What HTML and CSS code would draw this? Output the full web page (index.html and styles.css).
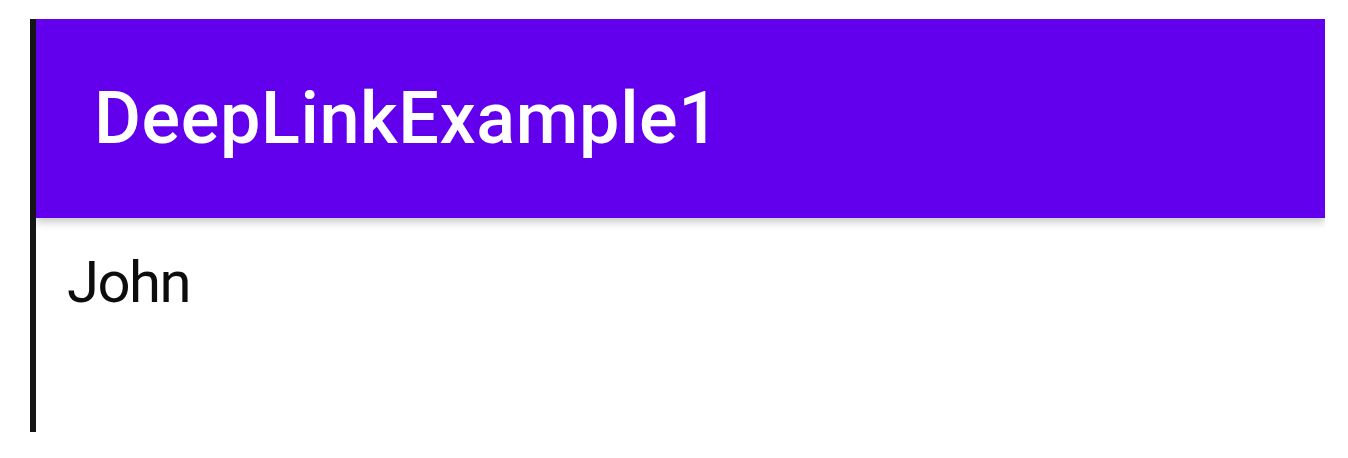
FILE: index.html
```html
<!DOCTYPE html>
<html>
<head>
<meta charset="utf-8">
<link rel="stylesheet" href="styles.css">
</head>
<body>
<div class="frame">
  <header class="appbar"><h1 class="title">DeepLinkExample1</h1></header>
  <main class="content"><p class="name">John</p></main>
</div>
</body>
</html>
```
FILE: styles.css
```css
html, body { margin: 0; padding: 0; background: #fff; }
.frame {
  margin: 19px 0 0 30px;
  width: 1295px;
  height: 413px;
  box-sizing: border-box;
  border-left: 6px solid #151515;
  display: flex;
  flex-direction: column;
  overflow: hidden;
}
.appbar {
  height: 199px;
  flex: none;
  background: #6200ee;
  display: flex;
  align-items: center;
  padding-left: 58px;
  box-shadow: 0 4px 8px rgba(0,0,0,0.22);
  position: relative;
  z-index: 1;
}
.title {
  margin: 0;
  font-family: Roboto, "Noto Sans", sans-serif;
  font-weight: 500;
  font-size: 72px;
  letter-spacing: 0.6px;
  color: #fff;
  line-height: 1;
}
.content { padding: 0 0 0 31px; }
.name {
  margin: 30px 0 0 0;
  font-family: Roboto, "Noto Sans", sans-serif;
  font-weight: 400;
  font-size: 58px;
  letter-spacing: -1.5px;
  line-height: 1.2;
  color: #0d0d0d;
}
```
